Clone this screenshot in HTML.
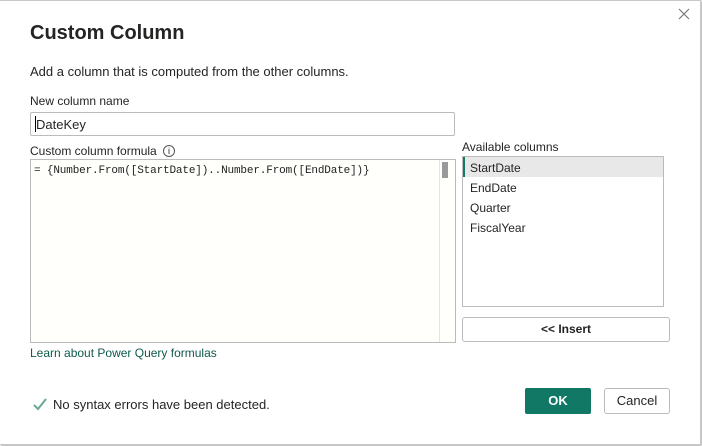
<!DOCTYPE html>
<html><head><style>
*{box-sizing:border-box;margin:0;padding:0}
body{width:702px;height:446px;background:#fff;position:relative;overflow:hidden;font-family:"Liberation Sans",sans-serif;color:#252423}
.dlg{position:absolute;left:0;top:0;width:701px;height:445px;border:1px solid #c8c8c8;border-left:none;box-shadow:1px 1px 2px #aaa}
.a{position:absolute;white-space:nowrap}
</style></head><body>
<div class="dlg"></div>
<svg class="a" style="left:678px;top:8px" width="12" height="12"><path d="M1 1L11 11M11 1L1 11" stroke="#777" stroke-width="1.2"/></svg>
<div class="a" style="left:30px;top:22px;font-size:20px;font-weight:bold;color:#252423">Custom Column</div>
<div class="a" style="left:30px;top:64px;font-size:13px">Add a column that is computed from the other columns.</div>
<div class="a" style="left:30px;top:94px;font-size:12px">New column name</div>
<div class="a" style="left:30px;top:112px;width:425px;height:24px;border:1px solid #bbb;border-radius:2px;font-size:13px;padding:4px 5px">DateKey</div>
<div class="a" style="left:35px;top:116px;width:1px;height:16px;background:#000"></div>
<div class="a" style="left:30px;top:144px;font-size:12px">Custom column formula</div>
<div class="a" style="left:163px;top:145px;width:12px;height:12px;border:1px solid #555;border-radius:50%;font-size:9px;text-align:center;line-height:10px">i</div>
<div class="a" style="left:30px;top:159px;width:426px;height:184px;border:1px solid #bbb;background:#fffffc"></div>
<div class="a" style="left:439px;top:160px;width:16px;height:182px;border-left:1px solid #e4e4e4"></div>
<div class="a" style="left:442px;top:162px;width:6px;height:16px;background:#999"></div>
<div class="a" style="left:34px;top:165px;font-family:'Liberation Mono',monospace;font-size:11px;letter-spacing:-0.15px;color:#222">= {Number.From([StartDate])..Number.From([EndDate])}</div>
<div class="a" style="left:462px;top:140px;font-size:12px">Available columns</div>
<div class="a" style="left:462px;top:156px;width:202px;height:151px;border:1px solid #bbb"></div>
<div class="a" style="left:463px;top:157px;width:200px;height:20px;background:#e8e8e8;border-left:2px solid #117865"></div>
<div class="a" style="left:470px;top:158px;font-size:12px;line-height:20px">StartDate<br>EndDate<br>Quarter<br>FiscalYear</div>
<div class="a" style="left:462px;top:317px;width:208px;height:25px;border:1px solid #bbb;border-radius:3px;font-size:12px;font-weight:bold;text-align:center;line-height:23px">&lt;&lt; Insert</div>
<div class="a" style="left:30px;top:346px;font-size:12px;color:#0e5a4c">Learn about Power Query formulas</div>
<svg class="a" style="left:32px;top:396px" width="16" height="16"><path d="M2 9L6 13L14 3" stroke="#6aa88f" stroke-width="2" fill="none"/></svg>
<div class="a" style="left:53px;top:397px;font-size:13px">No syntax errors have been detected.</div>
<div class="a" style="left:525px;top:388px;width:66px;height:26px;background:#117865;color:#fff;font-size:13px;font-weight:bold;text-align:center;line-height:26px;border-radius:2px">OK</div>
<div class="a" style="left:604px;top:388px;width:66px;height:26px;border:1px solid #bbb;border-radius:3px;font-size:13px;text-align:center;line-height:24px">Cancel</div>
</body></html>
